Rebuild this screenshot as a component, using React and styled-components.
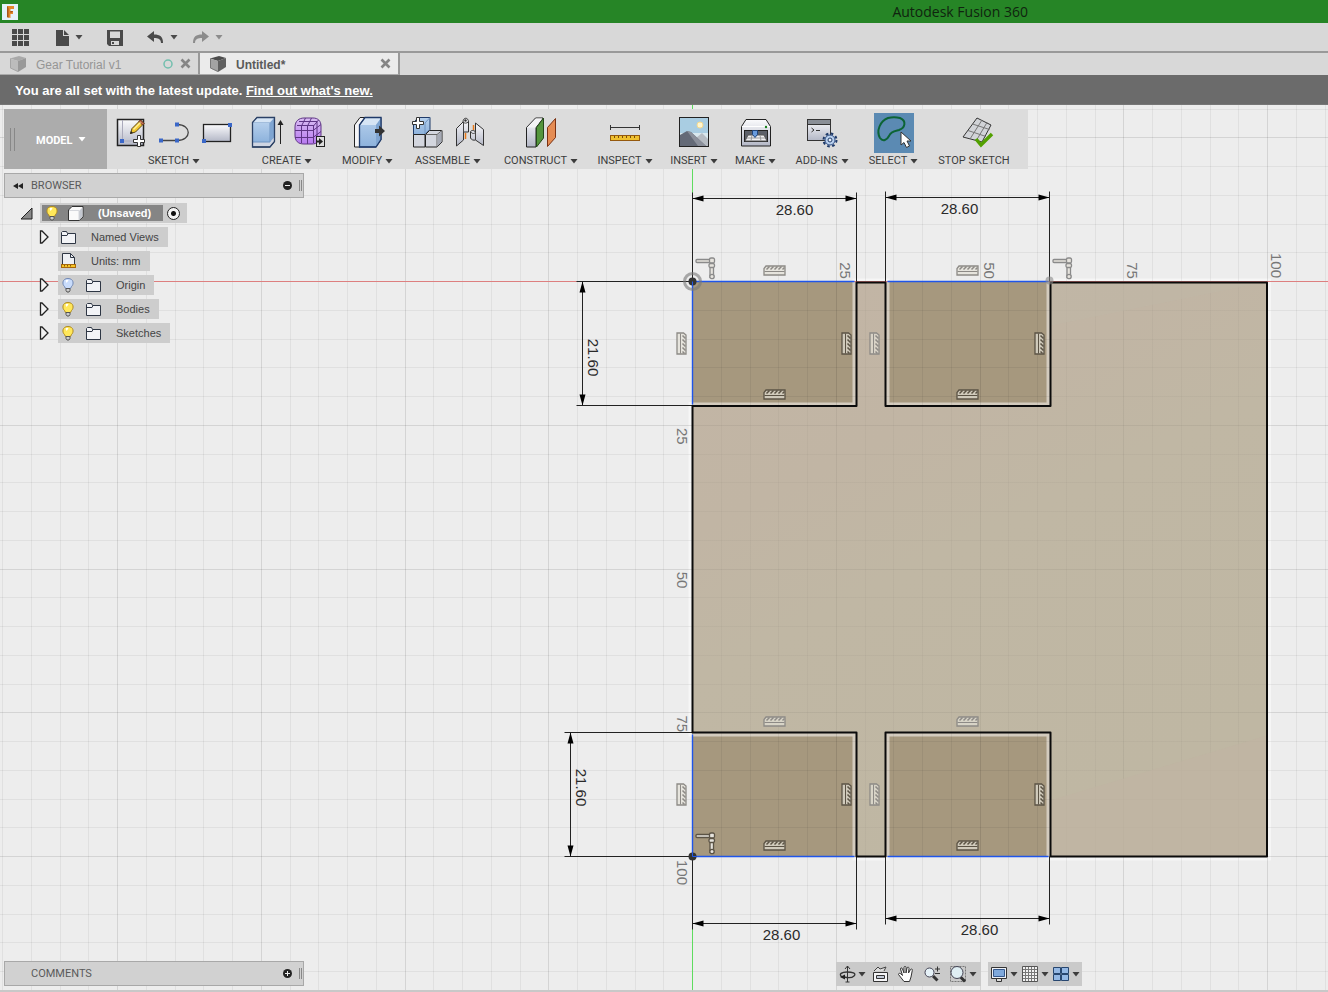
import React from 'react'
import styled, { createGlobalStyle } from 'styled-components'

const GlobalStyle = createGlobalStyle`
  * {
    box-sizing: border-box;
  }

  body {
    margin: 0;
    font-family: 'Liberation Sans', Arial, sans-serif;
    font-size: 11px;
    color: #3c3c3c;
    background: #ededed;
  }

  button {
    margin: 0;
    padding: 0;
    border: none;
    background: none;
    font: inherit;
    color: inherit;
    cursor: pointer;
  }

  svg {
    display: block;
    flex: none;
  }
`

const Page = styled.div`
  display: flex;
  flex-direction: column;
  min-height: 100vh;
  border-bottom: 2px solid #c8c8c8;
`

const TitleBar = styled.header`
  display: flex;
  align-items: center;
  justify-content: space-between;
  height: 23px;
  padding: 0 300px 0 2px;
  background: #268526;
`

const Title = styled.h1`
  margin: 0;
  font-family: 'Open Sans', sans-serif;
  font-size: 14px;
  font-weight: 400;
  line-height: 22px;
  color: #10240f;
`

const QuickBar = styled.div`
  display: flex;
  align-items: center;
  gap: 24px;
  height: 28px;
  padding: 1px 0 0 11px;
  background: #d8d8d8;
`

const History = styled.div`
  display: flex;
  gap: 14px;
`

const QuickButton = styled.button`
  display: flex;
  align-items: center;
  gap: 6px;
  color: ${props => (props.disabled ? '#8c8c8c' : '#4a4a4a')};
`

const TabStrip = styled.nav`
  display: flex;
  height: 24px;
  background: #d8d8d8;
  border-top: 2px solid #999;
`

const Tab = styled.div`
  display: flex;
  align-items: center;
  width: 200px;
  padding: 0 7px 0 10px;
  border-right: 2px solid #999;
  border-bottom: 1px solid #aaa;
  background: ${props => (props.$active ? '#ebebeb' : '#d8d8d8')};
  color: ${props => (props.$active ? '#5a5a5a' : '#959595')};
  font-size: 12px;
  font-weight: ${props => (props.$active ? 700 : 400)};
`

const TabName = styled.button`
  display: flex;
  flex: 1;
  align-items: center;
  gap: 10px;
  height: 21px;
  line-height: 17px;

  span {
    padding-top: 4px;
  }
`

const CloseButton = styled.button`
  margin-left: 7px;
  color: #858585;
`

const Notice = styled.div`
  height: 30px;
  padding-left: 15px;
  background: #6b6b6b;
  border-bottom: 1px solid #777;
  color: #fff;
  font-size: 13px;
  font-weight: 700;
  line-height: 31px;

  a {
    color: #fff;
  }
`

const Workspace = styled.main`
  position: relative;
  display: flex;
  flex: 1;
  flex-direction: column;
  align-items: flex-start;
  gap: 4px;
  padding: 4px;
`

const Canvas = styled.svg`
  position: absolute;
  inset: 0;
  width: 100%;
  height: 100%;
`

const Toolbar = styled.div`
  position: relative;
  display: flex;
  height: 60px;
  padding-right: 8px;
  background: #dcdcdc;
`

const ModelButton = styled.button`
  display: flex;
  align-items: center;
  width: 103px;
  padding-left: 6px;
  background: #acacac;
  color: #fff;
  font-family: Roboto, sans-serif;
  font-weight: 700;

  span {
    margin: 2px 5px 0 21px;
  }
`

const Grip = styled.i`
  width: ${props => (props.$small ? 3 : 5)}px;
  height: ${props => (props.$small ? 11 : 23)}px;
  border: solid #888;
  border-width: 0 1px;
`

const ToolGroup = styled.div`
  position: relative;
  display: flex;
  flex-direction: column;
  align-items: center;
  width: ${props => props.$width}px;
  padding-top: 4px;

  & + &::before {
    content: '';
    position: absolute;
    left: -1px;
    top: 4px;
    width: 2px;
    height: 52px;
    background: #c6c6c6;
  }
`

const Tools = styled.div`
  display: flex;
  gap: 3px;
`

const ToolButton = styled.button`
  height: 40px;
  background: ${props => (props.$selected ? '#5b8ab3' : 'none')};
`

const GroupLabel = styled.button`
  display: flex;
  align-items: center;
  gap: 3px;
  height: 16px;
  font-family: Roboto, sans-serif;
  font-size: 11px;
  line-height: 16px;
`

const Panel = styled.section`
  position: relative;
  width: 300px;
`

const PanelHeader = styled.div`
  display: flex;
  align-items: center;
  height: 25px;
  padding: 0 1px 0 8px;
  border: 1px solid #a8a8a8;
  background: #d1d1d1;
  color: #5a5a5a;
`

const PanelTitle = styled.h2`
  flex: 1;
  margin: 0 0 0 8px;
  font-family: Roboto, sans-serif;
  font-size: 11px;
  font-weight: 400;
`

const PanelToggle = styled.button`
  margin-right: 7px;
`

const CollapseButton = styled.button`
  width: 10px;
  height: 10px;
`

const Tree = styled.ul`
  display: flex;
  flex-direction: column;
  gap: 4px;
  margin: 5px 0 0;
  padding: 0 0 0 16px;
  list-style: none;
`

const TreeRow = styled.li`
  display: flex;
  align-items: center;
  height: 20px;
  padding-left: ${props => (props.$root ? 0 : 18)}px;
`

const Expander = styled.button`
  width: 20px;
  height: 16px;
`

const TreeItem = styled.div`
  display: flex;
  align-items: center;
  height: 20px;
  padding: ${props => (props.$root ? '2px 7px 2px 2px' : '0 9px 0 0')};
  background: #cdcdcd;
`

const TreeName = styled.span`
  display: flex;
  align-items: center;
  height: 100%;
  padding-right: ${props => (props.$root ? 12 : 0)}px;
  background: ${props => (props.$root ? '#858585' : 'none')};
  color: ${props => (props.$root ? '#fff' : '#444')};
  font-weight: ${props => (props.$root ? 700 : 400)};

  svg {
    margin-right: ${props => (props.$root ? 3 : 5)}px;
  }

  svg:last-of-type {
    margin-right: 13px;
  }
`

const ActiveRadio = styled.input`
  appearance: none;
  width: 13px;
  height: 13px;
  margin: 0 0 0 4px;
  border: 1px solid #222;
  border-radius: 50%;
  background: radial-gradient(circle, #111 0 2px, #f4f4f4 3px);
`

const Footer = styled.footer`
  display: flex;
  align-items: flex-end;
  justify-content: space-between;
  align-self: stretch;
  margin-top: auto;
  padding-right: 242px;
`

const NavBars = styled.div`
  position: relative;
  display: flex;
  gap: 7px;
`

const NavBar = styled.div`
  display: flex;
  height: 24px;
  padding: 0 1px;
  background: #cacaca;
`

const NavButton = styled.button`
  display: flex;
  align-items: center;
  gap: 1px;
  width: ${props => props.$width}px;
`

const Caret = () => (
  <svg width="8" height="5" viewBox="0 0 8 5">
    <path d="M0.5 0h7L4 4.6z" fill="currentColor" />
  </svg>
)

const Close = () => (
  <svg width="11" height="11" viewBox="0 0 11 11">
    <path d="M1.500 1.500l8 8M9.500 1.500l-8 8" stroke="currentColor" strokeWidth="2.6" />
  </svg>
)

const Cube = ({ dim }) => (
  <svg width="16" height="16" viewBox="0 0 16 16">
    <path d="M0 2.500L9 0l7 2-8 3z" fill={dim ? '#a9a9a9' : '#4c4c4c'} />
    <path d="M0 2.500L8 5v11l-8-4z" fill={dim ? '#bcbcbc' : '#a3a3a3'} />
    <path d="M16 2L8 5v11l8-5z" fill={dim ? '#999' : '#606060'} />
    <path d="M0.5 2.500V12L8 15.500" fill="none" stroke={dim ? '#a5a5a5' : '#777'} />
  </svg>
)

const Logo = () => (
  <svg width="16" height="16" viewBox="0 0 16 16">
    <rect width="16" height="16" fill="#e4f2fb" />
    <path d="M5 2h7v3H8.500v2H11v3H8.500v4L5 13z" fill="#e58a2c" />
    <path d="M5 2l1.500 2v10L5 13zM8.500 7H11l-1 1.500H8z" fill="#a8551a" />
  </svg>
)

const Icon = ({ size = 40, children }) => (
  <svg width={size} height={size} viewBox={`0 0 ${size} ${size}`} fill="none">
    {children}
  </svg>
)

const Gradients = () => (
  <defs>
    <linearGradient id="steel" x1="0" y1="0" x2="0" y2="1">
      <stop offset="0" stopColor="#fbfbfd" />
      <stop offset="1" stopColor="#b3b7c6" />
    </linearGradient>
    <linearGradient id="sky" x1="0" y1="0" x2="0" y2="1">
      <stop offset="0" stopColor="#b5cfec" />
      <stop offset="1" stopColor="#8db2dc" />
    </linearGradient>
    <linearGradient id="violet" x1="0" y1="0" x2="0" y2="1">
      <stop offset="0" stopColor="#d9bdf2" />
      <stop offset="1" stopColor="#b779f0" />
    </linearGradient>
    <linearGradient id="material" x1="0" y1="0" x2="0.5" y2="1">
      <stop offset="0.1" stopColor="#c2b5a5" />
      <stop offset="0.35" stopColor="#c1b5a4" />
      <stop offset="0.55" stopColor="#c0b7a4" />
      <stop offset="1" stopColor="#bfb7a3" />
    </linearGradient>
  </defs>
)

const blue = '#3a67c8'

const PlusMark = ({ x, y }) => (
  <path
    transform={`translate(${x} ${y})`}
    d="M-1.500-5.500h3v4h4v3h-4v4h-3v-4h-4v-3h4z"
    fill="#fff"
    stroke="#333"
  />
)

const icons = {
  createSketch: (
    <Icon>
      <rect x="6.500" y="6.500" width="26" height="26" fill="url(#steel)" stroke="#222" strokeWidth="1.500" />
      <path d="M11.500 7v21H32" stroke="#aab" />
      <rect x="9" y="26" width="4" height="4" fill={blue} />
      <path d="M19.500 20.500l1.500-5L29.500 7l3.500 3.500-8.500 8.500z" fill="#f2c831" stroke="#5b4615" />
      <path d="M28 8.500l1.500-1.500L33 10.500 31.500 12z" fill="#c9735a" stroke="#6d3524" />
      <path d="M22.500 16.500l7-7" stroke="#fff09a" strokeWidth="1.500" />
      <path d="M19 21l1-3 2 2z" fill="#222" />
      <PlusMark x={28} y={28} />
    </Icon>
  ),
  line: (
    <Icon>
      <path d="M7 27.500h16c15 0 15-16 0-16" stroke="#444" strokeWidth="1.300" />
      <path d="M5 25.500h4v4H5zM21 25.500h4v4h-4zM21 9.500h4v4h-4z" fill={blue} />
    </Icon>
  ),
  rectangle: (
    <Icon>
      <rect x="6.500" y="11.500" width="27" height="17" fill="url(#steel)" stroke="#222" strokeWidth="1.300" />
      <path d="M5 26h4v4H5zM31 10h4v4h-4z" fill={blue} />
    </Icon>
  ),
  extrude: (
    <Icon>
      <path d="M6.500 9.500L11 4.500h17.500v24l-4.500 5.500H6.500z" fill="#cfd5e2" stroke="#2b3346" />
      <path d="M6.500 9.500H24V29H6.500z" fill="url(#sky)" stroke="#6f94c2" />
      <path d="M6.500 9.500L11 4.500h17.500L24 9.500z" fill="#d6e5f5" />
      <path d="M24 9.500l4.500-5V24L24 29z" fill="#7fa5d2" />
      <path d="M6.500 9.500L11 4.500h17.500v24l-4.500 5.500H6.500z" stroke="#2b4166" strokeWidth="1.300" />
      <path d="M34.500 31V10" stroke="#222" />
      <path d="M31.500 12l3-5 3 5z" fill="#222" />
    </Icon>
  ),
  form: (
    <Icon>
      <path d="M6 14c0-6 4-9 9-9h9c5 0 8 3 8 8v9c0 6-4 9-9 9h-8c-6 0-9-3-9-9z" fill="url(#violet)" stroke="#5e3585" />
      <path d="M6 17.500h18l8-6M6 24.500h18l8-6M12.500 30V13l4-8M18.500 31V13l4-8M24.500 30V13l5-6M8 12.500h17M10 8.500h18M28 9v18" stroke="#5e3585" />
      <rect x="27.500" y="23.500" width="8" height="10" fill="#ddd" stroke="#222" />
      <path d="M28 28.500h3" stroke="#222" strokeWidth="2" />
      <path d="M30 25l4 3.500-4 3.500z" fill="#222" />
    </Icon>
  ),
  pressPull: (
    <Icon>
      <path d="M6.500 12L12 4.500h6L12 12v22H6.500z" fill="#f5f5f7" stroke="#222" />
      <path d="M11.500 12L17 4.500h16v22L28 34H11.500z" fill="url(#sky)" stroke="#1f3a69" />
      <path d="M12 12l5-7h16l-5 7z" fill="#d6e5f5" />
      <path d="M28 12l5-7v21.500L28 34z" fill="#7fa5d2" />
      <path d="M11.500 12L17 4.500h16v22L28 34H11.500z" stroke="#1f3a69" strokeWidth="1.300" />
      <path d="M27 16h4v-3.500l6 5.500-6 5.500V20h-4z" fill="#333" />
    </Icon>
  ),
  component: (
    <Icon>
      <path d="M6.500 21.500V10L11 4.500h12v12l-5 5z" fill="url(#sky)" stroke="#1f3a69" />
      <path d="M18 21.500V10l5-5.500" stroke="#6f94c2" />
      <path d="M6.500 21.500H18V34H6.500zM18.500 21.500l4-4h12.500V29L30 34H18.500z" fill="#d3d6de" stroke="#222" />
      <path d="M18.500 21.500H30V34M30 21.500l5-4" stroke="#666" />
      <path d="M30.500 22l4-3.500V29l-4 4z" fill="#a5a9b4" />
      <PlusMark x={11} y={10} />
    </Icon>
  ),
  joint: (
    <Icon>
      <path d="M6.500 15.500L13 9c0-5 5.500-5 5.500 0v10h-5v8l-7 6z" fill="url(#steel)" stroke="#333" />
      <path d="M13.500 9v10M13 9c1.500 1.500 4 1.500 5 0" stroke="#444" />
      <circle cx="15.500" cy="7.500" r="1.200" fill="#333" />
      <path d="M15.500 20v6M23.500 12v5" stroke="#e77819" strokeWidth="1.500" />
      <path d="M33.500 16.500L25.500 10v9c-1-2-5-2-5 0v6c1 2 3 2.500 5 2l8 5.500z" fill="url(#steel)" stroke="#333" />
      <path d="M21 19c1 2 4 2 4.500 0v8" stroke="#444" />
    </Icon>
  ),
  plane: (
    <Icon>
      <path d="M5.500 14.500l9-9.500H22l-7 9.500V34H5.500z" fill="url(#steel)" stroke="#222" />
      <path d="M6 14.500l9-9h6.500l-7 9z" fill="#f4f4f6" />
      <path d="M15.500 14.500l7-9.500v20l-7 9z" fill="#54963d" stroke="#24491a" />
      <path d="M26.500 14.500l8-9v19l-8 9z" fill="#e58c53" stroke="#7c3213" />
    </Icon>
  ),
  measure: (
    <Icon>
      <path d="M5.500 12v5M34.500 12v5M5.500 14.500h29" stroke="#333" />
      <rect x="5.500" y="22.500" width="29" height="5" fill="#efc02e" stroke="#95590e" />
      <path d="M9.500 23v2M13.500 23v2M17.500 23v2M21.500 23v2M25.500 23v2M29.500 23v2" stroke="#7a4b0a" />
    </Icon>
  ),
  image: (
    <Icon>
      <rect x="5.500" y="4.500" width="29" height="29" fill="#a9cde2" stroke="#222" />
      <path d="M6 20h28v9H6z" fill="#d9e8ee" />
      <path d="M22 25l6-5 6 6v7H18z" fill="#b6bcc3" />
      <path d="M6 22l7-4 4 1 15 14H6z" fill="#646a77" />
      <path d="M13 18l4 1 15 14h-8z" fill="#8b909b" />
      <circle cx="26" cy="12" r="3" fill="#fff6cf" stroke="#f6d98d" />
    </Icon>
  ),
  print: (
    <Icon>
      <path d="M5.500 13.500L10 6.500h20l4.500 7V33h-29z" fill="url(#steel)" stroke="#222" strokeLinejoin="round" />
      <path d="M6 13.500h28" stroke="#fff" />
      <circle cx="30" cy="14" r="1.200" fill="#18811d" />
      <rect x="8.500" y="17.500" width="23" height="11" fill="#5c6069" stroke="#222" />
      <path d="M12 22h16l3 6H9z" fill="#f0f0f3" stroke="#555" />
      <path d="M16 22l-1 6M24 22l1 6M11 25h18" stroke="#999" />
      <path d="M16.500 17.500h5v4l-2.500 3-2.500-3z" fill="#689bdd" stroke="#20457d" />
    </Icon>
  ),
  script: (
    <Icon>
      <rect x="5.500" y="6.500" width="23" height="21" fill="url(#steel)" stroke="#333" />
      <path d="M6 7h22v4H6z" fill="#8a8f97" />
      <path d="M6 11.500h22" stroke="#333" />
      <path d="M9.500 15l2.500 2-2.500 2M14 17.500h4" stroke="#333" />
      <circle cx="28" cy="27" r="6.500" stroke="#1f3a69" strokeWidth="2" strokeDasharray="2.600 2.500" />
      <circle cx="28" cy="27" r="5" fill="#b9d0ee" stroke="#2c4d85" />
      <circle cx="28" cy="27" r="2" fill="#e9eff7" stroke="#1f3a69" />
    </Icon>
  ),
  select: (
    <Icon>
      <path
        d="M14 5C6 8 2 18 6 25c3 4 7 2 9-2 2-5 6-5 10-6 6-2 8-9 1-12-4-1-8-1-12 0z"
        stroke="#0c6435"
        strokeWidth="2"
      />
      <path d="M27 19v13l3-2.500 2.500 5 3-1.500-2.500-5h4z" fill="#fff" stroke="#333" />
    </Icon>
  ),
  stopSketch: (
    <Icon>
      <path d="M23 5l14 7-9 17-19-5z" fill="#d2d4d8" stroke="#333" />
      <path d="M28 7L16 26M33 9.500L22 28M18.500 11l17 5.500M14 17.500l18 6" stroke="#777" />
      <path d="M22 26l5 6L38 21" stroke="#52a000" strokeWidth="3.500" />
    </Icon>
  ),
}

const toolGroups = [
  { label: 'SKETCH', width: 134, tools: ['createSketch', 'line', 'rectangle'] },
  { label: 'CREATE', width: 92, tools: ['extrude', 'form'] },
  { label: 'MODIFY', width: 69, tools: ['pressPull'] },
  { label: 'ASSEMBLE', width: 92, tools: ['component', 'joint'] },
  { label: 'CONSTRUCT', width: 94, tools: ['plane'] },
  { label: 'INSPECT', width: 74, tools: ['measure'] },
  { label: 'INSERT', width: 64, tools: ['image'] },
  { label: 'MAKE', width: 59, tools: ['print'] },
  { label: 'ADD-INS', width: 74, tools: ['script'] },
  { label: 'SELECT', width: 69, tools: ['select'] },
  { label: 'STOP SKETCH', width: 92, tools: ['stopSketch'], plain: true },
]

const Bulb = ({ off }) => (
  <Icon size={20}>
    <path
      d="M10 3.500c-6 0-6 6-3.500 8l1 2h5l1-2c2.500-2 2.500-8-3.500-8z"
      fill={off ? '#c9dcfb' : '#ffe75a'}
      stroke={off ? '#6f87b5' : '#b08a1d'}
    />
    <path d="M7.500 5.500c1-1 2-1 3 0L8.500 8z" fill="#fff" />
    <path d="M8 13.500h4v2l-1 1.500H9l-1-1.500z" fill="#ccc" stroke="#555" />
  </Icon>
)

const Folder = () => (
  <Icon size={20}>
    <path d="M3.500 16.500v-11l1-1h4l1 2h8v10z" fill="#f2f3f6" stroke="#2e3644" />
    <path d="M4 8.500h5l1-2" stroke="#2e3644" />
  </Icon>
)

const Units = () => (
  <Icon size={20}>
    <path d="M4.500 13V2.500h8l4 4V13" fill="#eef0f4" stroke="#2e3644" />
    <path d="M12.500 2.500v4h4" stroke="#2e3644" />
    <rect x="3.500" y="13.500" width="14" height="3" fill="#f6c529" stroke="#a8690c" />
    <path d="M6.500 14v1.500M9.500 14v1.500M12.500 14v1.500" stroke="#8a560a" />
  </Icon>
)

const Body = () => (
  <Icon size={20}>
    <path d="M3.500 7L7 3.500h11v10.500L14 17.500H3.500z" fill="#fafafa" stroke="#333" strokeLinejoin="round" />
    <path d="M14 8l3.500-3.500v9L14 17z" fill="#c4c8d0" />
    <path d="M4 7.500h10V17" stroke="#d5d7dc" />
  </Icon>
)

const treeItems = [
  { name: 'Named Views', art: [<Folder key="f" />], open: true },
  { name: 'Units: mm', art: [<Units key="u" />] },
  { name: 'Origin', art: [<Bulb key="b" off />, <Folder key="f" />], open: true },
  { name: 'Bodies', art: [<Bulb key="b" />, <Folder key="f" />], open: true },
  { name: 'Sketches', art: [<Bulb key="b" />, <Folder key="f" />], open: true },
]

// Sketch geometry is in pixels from the sketch origin, 5 mm per grid step.
const STEP = 28.75
const steps = Array.from({ length: 120 }, (_, i) => i - 50)
const outline = 'M0 124.500H164V1H193V124.500H358V1H574.500V575H358V451H193V575H164V451H0Z'

const Comb = ({ x, y, vertical, strong }) => (
  <g
    transform={`translate(${x} ${y}) rotate(${vertical ? 90 : 0})`}
    stroke={strong ? '#5b5345' : '#8d8a86'}
    fill="none"
  >
    <path d="M-10.500 4.500V-2l2-2.500h19v9z" fill="#e3dfd6" fillOpacity="0.7" strokeWidth="1.300" />
    <path d="M-10 1h20" />
    <path d="M-8-1l3-3M-4-1l3-3M0-1l3-3M4-1l3-3M8-1l2-2" strokeWidth="1.500" />
  </g>
)

const Perpendicular = ({ x, y, strong }) => (
  <g
    transform={`translate(${x} ${y})`}
    stroke={strong ? '#5b5345' : '#8a8a8a'}
    strokeWidth="1.300"
    fill="#e6e3dd"
  >
    <rect x="-11.500" y="-9" width="17" height="3" rx="1" />
    <rect x="2.500" y="-5" width="3.500" height="14" />
    <rect x="2" y="-10.500" width="5" height="5" rx="1.500" />
    <rect x="1.500" y="-5" width="5.500" height="4" rx="1.500" />
    <circle cx="4.500" cy="8" r="2.200" />
  </g>
)

const Arrow = ({ x, y, turn }) => (
  <path transform={`translate(${x} ${y}) rotate(${turn})`} d="M0 0l11-3v6z" fill="#000" />
)

const Measure = ({ x, y, turn = 0, value = '28.60', color = '#2a2a2a' }) => (
  <text
    transform={`translate(${x} ${y}) rotate(${turn})`}
    textAnchor="middle"
    dominantBaseline="central"
    fontSize="15"
    fill={color}
  >
    {value}
  </text>
)

const WidthDimension = ({ from, to, y, base, text }) => {
  const end = y + (y < 0 ? -6 : 6)
  return (
    <g>
      <path
        d={`M${from} ${base}V${end}M${to} ${base}V${end}M${from} ${y}H${to}`}
        fill="none"
        stroke="#222"
      />
      <Arrow x={from} y={y} turn={0} />
      <Arrow x={to} y={y} turn={180} />
      <Measure x={text} y={y + 11} />
    </g>
  )
}

const HeightDimension = ({ from, to, x, text }) => (
  <g>
    <path
      d={`M0 ${from}H${x - 6}M0 ${to}H${x - 6}M${x} ${from}V${to}`}
      fill="none"
      stroke="#222"
    />
    <Arrow x={x} y={from} turn={90} />
    <Arrow x={x} y={to} turn={-90} />
    <Measure x={x + 11} y={text} turn={90} value="21.60" />
  </g>
)

const Sketch = () => (
  <Canvas>
    <Gradients />
    <g transform="translate(692.500 176.500)">
      <path d={outline} fill="none" stroke="#fff" strokeOpacity="0.5" strokeWidth="8" />
      <rect width="574" height="575" fill="url(#material)" />
      <path
        d="M0 0h164v124H0zM193 0h165v124H193zM0 451h164v124H0zM193 451h165v124H193z"
        fill="#d3cbbe"
      />
      <path
        d="M0 0h160v121H0zM197 0h157v121H197zM0 455h160v120H0zM197 455h157v120H197z"
        fill="#a6987e"
      />
      {steps.map(i => {
        const at = Math.round(i * STEP)
        return (
          <path
            key={i}
            d={`M${at} -400V3000M-2000 ${at}H3000`}
            fill="none"
            stroke="#000"
            strokeOpacity={i % 5 === 0 ? 0.1 : 0.055}
          />
        )
      })}
      {/* the solid body veils the grid, the open pockets do not */}
      <path d={outline} fill="url(#material)" fillOpacity="0.5" />
      <path d="M358 0h217L358 44z" fill="#c0b8a6" fillOpacity="0.6" />
      <path d="M358 519l217-65v121H358z" fill="#c1b3a3" fillOpacity="0.7" />
      <line x1="-2000" x2="3000" y1="0" y2="0" stroke="#dd7f7f" />
      <path d="M0 -400V0M0 575V3000" fill="none" stroke="#5fdc5f" />
      <WidthDimension from={0} to={164} y={-83} base={0} text={102} />
      <WidthDimension from={193} to={357} y={-84} base={0} text={267} />
      <WidthDimension from={0} to={164} y={642} base={575} text={89} />
      <WidthDimension from={193} to={357} y={637} base={575} text={287} />
      <HeightDimension from={0} to={124} x={-110} text={76} />
      <HeightDimension from={451} to={575} x={-122} text={506} />
      <path d={outline} fill="none" stroke="#0b0b0b" strokeWidth="2" strokeLinejoin="round" />
      <path
        d="M0 123V0H162M195 0H356M0 453V575H162M195 575H356"
        stroke="#1f55ea"
        strokeWidth="1.400"
        fill="none"
      />
      {[25, 50, 75, 100].map(mm => (
        <g key={mm}>
          <Measure x={mm * 5.75 + 9} y={mm === 100 ? -16 : -11} turn={90} value={mm} color="#777" />
          <Measure x={-10} y={mm * 5.75 + (mm === 100 ? 16 : 11)} turn={90} value={mm} color="#777" />
        </g>
      ))}
      {[82, 275].map(x => (
        <g key={x}>
          <Comb x={x} y={-11} />
          <Comb x={x} y={113} strong />
          <Comb x={x} y={440} />
          <Comb x={x} y={564} strong />
        </g>
      ))}
      {[62, 513].map(y => (
        <g key={y}>
          <Comb x={-11} y={y} vertical />
          <Comb x={154} y={y} vertical strong />
          <Comb x={182} y={y} vertical />
          <Comb x={347} y={y} vertical strong />
        </g>
      ))}
      <Perpendicular x={15} y={-13} />
      <Perpendicular x={372} y={-13} />
      <Perpendicular x={15} y={562} strong />
      <circle r="8" fill="none" stroke="#777" strokeOpacity="0.6" strokeWidth="3" />
      <circle r="4" fill="#333" />
      <circle cx="357" cy="-1" r="4" fill="#888" fillOpacity="0.6" />
      <circle cy="575" r="4" fill="#333" />
      <path d="M0 0v4M0 571v4h4" stroke="#2057e8" fill="none" />
    </g>
  </Canvas>
)

const Round = ({ plus }) => (
  <svg width="9" height="9" viewBox="0 0 9 9">
    <circle cx="4.500" cy="4.500" r="4.500" fill="#222" />
    <path d={plus ? 'M2 4.500h5M4.500 2v5' : 'M2 4.500h5'} stroke="#eee" />
  </svg>
)

const navIcons = [
  [
    {
      name: 'Orbit',
      width: 33,
      caret: true,
      art: (
        <>
          <path d="M10.500 2v16M8 5l2.500-3L13 5M8.500 18h4" stroke="#333" />
          <path d="M5 13c-4-3 0-5 5-5s10 1 7 4c-2 2-6 2-10 1" stroke="#333" strokeWidth="1.300" />
          <path d="M3 13l5-2.500v5z" fill="#222" />
        </>
      ),
    },
    {
      name: 'Look at',
      width: 26,
      art: (
        <>
          <path d="M3.500 8.500h14v9h-14z" fill="#f5f5f7" stroke="#333" />
          <path d="M6.500 11.500h8v3h-8z" fill="#c4cbd8" stroke="#333" />
          <path d="M4 7l4-4 2 2 6-2-2 4" fill="#ddd" stroke="#444" />
        </>
      ),
    },
    {
      name: 'Pan',
      width: 26,
      art: (
        <path
          d="M8 17.500l-5.500-7c0-1.500 1.500-1.500 2.500-.5l1.500 1.500L4.500 5c0-1.500 1.500-1.500 2 0L8 9V3.500c0-1.500 2-1.500 2 0V9l1-5c.5-1.500 2-1 2 .5L12.500 9l2-3.500c1-1 2-.5 1.800.8L15 13l-1.500 4.500z"
          fill="#fff"
          stroke="#333"
        />
      ),
    },
    {
      name: 'Zoom',
      width: 26,
      art: (
        <>
          <path d="M11 12l4.500 4.500" stroke="#333" strokeWidth="3" />
          <circle cx="7.500" cy="8.500" r="4.500" fill="#e6f2f8" stroke="#445" />
          <path d="M13 5h5M15.500 2.500v5M13 9.500h5" stroke="#333" />
        </>
      ),
    },
    {
      name: 'Zoom window',
      width: 32,
      caret: true,
      art: (
        <>
          <path d="M2.500 2.500h15v15h-15z" stroke="#777" strokeDasharray="2 1" />
          <path d="M12.500 13l4.500 4.500" stroke="#333" strokeWidth="3" />
          <circle cx="9" cy="8.500" r="6" fill="#dfeef3" stroke="#445" />
        </>
      ),
    },
  ],
  [
    {
      name: 'Display settings',
      width: 31,
      caret: true,
      art: (
        <>
          <path d="M2.500 3.500h15v11h-15z" fill="#eef1f6" stroke="#333" />
          <path d="M4.500 5.500h11v7h-11z" fill="#7fa9dc" stroke="#35588c" />
          <path d="M7.500 14.500h5v3h-5z" fill="#ddd" stroke="#333" />
        </>
      ),
    },
    {
      name: 'Grid and snaps',
      width: 31,
      caret: true,
      art: (
        <>
          <path d="M2.500 2.500h15v15h-15z" fill="#f2f2f2" stroke="#555" />
          <path d="M5.500 3v14M8.500 3v14M11.500 3v14M14.500 3v14M3 5.500h14M3 8.500h14M3 11.500h14M3 14.500h14" stroke="#777" />
        </>
      ),
    },
    {
      name: 'Viewports',
      width: 30,
      caret: true,
      art: (
        <path
          d="M2.500 3.500h7v6h-7zM10.500 3.500h7v6h-7zM2.500 10.500h7v6h-7zM10.500 10.500h7v6h-7z"
          fill="#94b8e4"
          stroke="#27466f"
        />
      ),
    },
  ],
]

const App = () => (
  <Page>
    <GlobalStyle />
    <TitleBar>
      <Logo />
      <Title>Autodesk Fusion 360</Title>
    </TitleBar>
    <QuickBar>
      <QuickButton aria-label="Data panel">
        <svg width="19" height="17" viewBox="0 0 19 17">
          <path
            d="M1 0h5v5H1zM7 0h5v5H7zM13 0h5v5h-5zM1 6h5v5H1zM7 6h5v5H7zM13 6h5v5h-5zM1 12h5v5H1zM7 12h5v5H7zM13 12h5v5h-5z"
            fill="currentColor"
          />
        </svg>
      </QuickButton>
      <QuickButton aria-label="File">
        <svg width="15" height="16" viewBox="0 0 15 16">
          <path d="M2 0h7v6h6v10H2zM10 0l5 5h-5z" fill="currentColor" />
        </svg>
        <Caret />
      </QuickButton>
      <QuickButton aria-label="Save">
        <svg width="16" height="16" viewBox="0 0 16 16">
          <path d="M0 0h16v16H2l-2-2zM3 1.500V8h10V1.500zM4 11v4h8v-4z" fill="currentColor" fillRule="evenodd" />
          <path d="M5 12h2v2H5z" fill="currentColor" />
        </svg>
      </QuickButton>
      <History>
        <QuickButton aria-label="Undo">
          <svg width="17" height="13" viewBox="0 0 17 13">
            <path d="M0 5.500L7 0v3.500c6 0 9 2 9 8.500h-2c0-4-3-5-7-5V11z" fill="currentColor" />
          </svg>
          <Caret />
        </QuickButton>
        <QuickButton aria-label="Redo" disabled>
          <svg width="17" height="13" viewBox="0 0 17 13">
            <path d="M17 5.500L10 0v3.500c-6 0-9 2-9 8.500h2c0-4 3-5 7-5V11z" fill="currentColor" />
          </svg>
          <Caret />
        </QuickButton>
      </History>
    </QuickBar>
    <TabStrip>
      <Tab>
        <TabName>
          <Cube dim />
          <span>Gear Tutorial v1</span>
        </TabName>
        <svg width="10" height="10" viewBox="0 0 10 10">
          <circle cx="5" cy="5" r="4" fill="none" stroke="#72bfae" strokeWidth="1.500" />
        </svg>
        <CloseButton aria-label="Close Gear Tutorial v1">
          <Close />
        </CloseButton>
      </Tab>
      <Tab $active>
        <TabName>
          <Cube />
          <span>Untitled*</span>
        </TabName>
        <CloseButton aria-label="Close Untitled">
          <Close />
        </CloseButton>
      </Tab>
    </TabStrip>
    <Notice>
      You are all set with the latest update. <a href="#new">Find out what's new.</a>
    </Notice>
    <Workspace>
      <Sketch />
      <Toolbar>
        <ModelButton>
          <Grip />
          <span>MODEL</span>
          <Caret />
        </ModelButton>
        {toolGroups.map(group => (
          <ToolGroup key={group.label} $width={group.width}>
            <Tools>
              {group.tools.map(tool => (
                <ToolButton key={tool} aria-label={tool} $selected={tool === 'select'}>
                  {icons[tool]}
                </ToolButton>
              ))}
            </Tools>
            <GroupLabel>
              {group.label}
              {!group.plain && <Caret />}
            </GroupLabel>
          </ToolGroup>
        ))}
      </Toolbar>
      <Panel>
        <PanelHeader>
          <CollapseButton aria-label="Collapse browser">
            <svg width="10" height="8" viewBox="0 0 10 8">
              <path d="M0 4l5-3v6zM5 4l5-3v6z" fill="#222" />
            </svg>
          </CollapseButton>
          <PanelTitle>BROWSER</PanelTitle>
          <PanelToggle aria-label="Hide">
            <Round />
          </PanelToggle>
          <Grip $small />
        </PanelHeader>
        <Tree>
          <TreeRow $root>
            <Expander aria-label="Collapse">
              <svg width="13" height="13" viewBox="0 0 13 13">
                <path d="M1 12L12 1v11z" fill="#8a8a8a" stroke="#222" />
              </svg>
            </Expander>
            <TreeItem $root>
              <TreeName $root>
                <Bulb />
                <Body />
                (Unsaved)
              </TreeName>
              <ActiveRadio type="radio" aria-label="Activate" defaultChecked />
            </TreeItem>
          </TreeRow>
          {treeItems.map(item => (
            <TreeRow key={item.name}>
              <Expander aria-label={`Expand ${item.name}`}>
                {item.open && (
                  <svg width="12" height="14" viewBox="0 0 12 14">
                    <path d="M2.500 1H4l6 6-6 6H2.500z" fill="#f2f2f2" stroke="#222" strokeWidth="1.300" />
                  </svg>
                )}
              </Expander>
              <TreeItem>
                <TreeName>
                  {item.art}
                  {item.name}
                </TreeName>
              </TreeItem>
            </TreeRow>
          ))}
        </Tree>
      </Panel>
      <Footer>
        <Panel>
          <PanelHeader>
            <CollapseButton aria-label="Comments" />
            <PanelTitle>COMMENTS</PanelTitle>
            <PanelToggle aria-label="Show">
              <Round plus />
            </PanelToggle>
            <Grip $small />
          </PanelHeader>
        </Panel>
        <NavBars>
          {navIcons.map(bar => (
            <NavBar key={bar[0].name}>
              {bar.map(item => (
                <NavButton key={item.name} aria-label={item.name} $width={item.width}>
                  <Icon size={20}>{item.art}</Icon>
                  {item.caret && <Caret />}
                </NavButton>
              ))}
            </NavBar>
          ))}
        </NavBars>
      </Footer>
    </Workspace>
  </Page>
)

export default App
